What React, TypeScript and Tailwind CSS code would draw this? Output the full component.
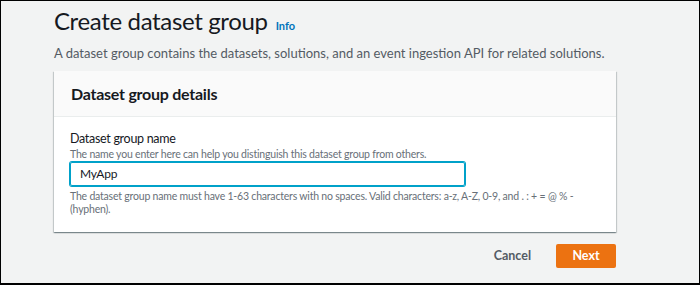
export default function App() {
  return (
    <div className="h-[285px] w-[700px] overflow-hidden border-x border-t border-b-2 border-black bg-[#f2f3f3] font-['Lato',sans-serif] text-[#16191f]">
      <div className="pl-[53px] pr-[83px] pt-[3px]">
        <div className="flex items-baseline gap-[8px]">
          <h1 className="text-[24px] leading-[34px] font-normal tracking-[-0.35px]">Create dataset group</h1>
          <a className="text-[11px] font-bold text-[#0073bb]">Info</a>
        </div>
        <p className="mt-[6px] text-[13px] leading-[18px] text-[#545b64]">
          A dataset group contains the datasets, solutions, and an event ingestion API for related solutions.
        </p>

        <div className="mt-[9px] bg-white shadow-[0_1px_1px_0_rgba(0,28,36,0.3),1px_1px_1px_0_rgba(0,28,36,0.15),-1px_1px_1px_0_rgba(0,28,36,0.15)]">
          <div className="flex h-[46px] items-center border-b border-[#eaeded] bg-[#fafafa] px-[17px]">
            <h2 className="text-[16px] font-bold tracking-[-0.25px]">Dataset group details</h2>
          </div>
          <div className="px-[16px] pt-[14px] pb-[16px]">
            <div className="text-[12.5px] leading-[16px] tracking-[-0.3px]">Dataset group name</div>
            <div className="text-[10.5px] leading-[14px] tracking-[-0.2px] text-[#687078]">
              The name you enter here can help you distinguish this dataset group from others.
            </div>
            <div className="mt-[1px] flex h-[24px] w-[395px] items-center rounded-[2px] border border-[#00a1c9] px-[9px] shadow-[0_0_0_1px_#00a1c9] text-[12px] tracking-[-0.2px]">
              MyApp
            </div>
            <div className="mt-[4px] text-[10.5px] leading-[13px] tracking-[-0.2px] text-[#687078]">
              The dataset group name must have 1-63 characters with no spaces. Valid characters: a-z, A-Z, 0-9, and . : + = @ % -
              <br />
              (hyphen).
            </div>
          </div>
        </div>

        <div className="mt-[12px] flex items-center justify-end gap-[25px]">
          <button className="text-[12.5px] font-bold text-[#545b64]">Cancel</button>
          <button className="h-[24px] w-[60px] rounded-[2px] bg-[#ec7211] text-[12.5px] font-bold text-white">Next</button>
        </div>
      </div>
    </div>
  );
}
